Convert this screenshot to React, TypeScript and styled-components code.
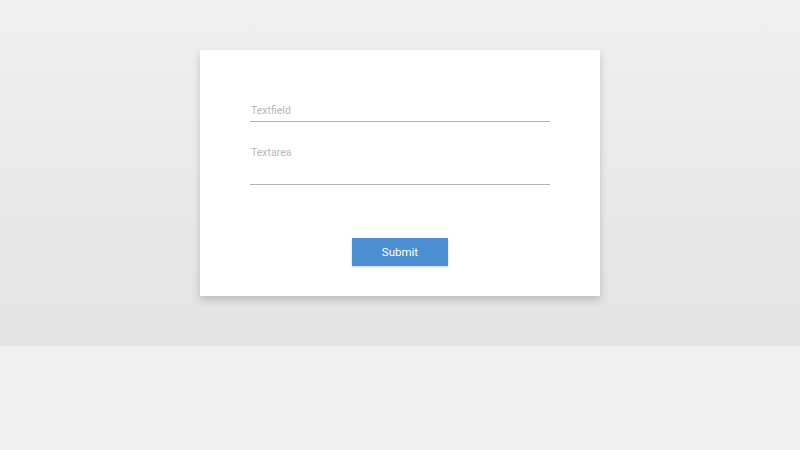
import React from "react";
import styled, { createGlobalStyle } from "styled-components";

const GlobalStyle = createGlobalStyle`
  * {
    box-sizing: border-box;
  }
  body {
    margin: 0;
    background: #f0f0f0;
    font-family: Roboto, "Liberation Sans", sans-serif;
  }
`;

const Stage = styled.div`
  height: 346px;
  padding-top: 50px;
  background: linear-gradient(to bottom, #f0f0f0 0%, #e3e3e3 100%);
  display: flex;
  justify-content: center;
  align-items: flex-start;
`;

const Card = styled.form`
  width: 400px;
  background: #fff;
  padding: 50px 50px 30px;
  box-shadow: 0 4px 8px rgba(0, 0, 0, 0.18);
  display: flex;
  flex-direction: column;
`;

const Field = styled.input`
  display: block;
  width: 100%;
  height: 22px;
  border: none;
  border-bottom: 1px solid #b3b3b3;
  padding: 0 1px;
  outline: none;
  font-family: inherit;
  font-size: 10.5px;
  color: #333;
  background: transparent;

  &::placeholder {
    color: #b5b5b5;
  }
`;

const Area = styled.textarea`
  display: block;
  width: 100%;
  height: 43px;
  margin-top: 20px;
  border: none;
  border-bottom: 1px solid #b3b3b3;
  padding: 5px 1px 0;
  outline: none;
  resize: none;
  font-family: inherit;
  font-size: 10.5px;
  line-height: 12px;
  color: #333;
  background: transparent;

  &::placeholder {
    color: #b5b5b5;
  }
`;

const Actions = styled.div`
  display: flex;
  justify-content: center;
  margin-top: 53px;
`;

const SubmitButton = styled.button`
  width: 96px;
  height: 28px;
  border: none;
  background: #4b8fd3;
  color: #fff;
  font-family: inherit;
  font-size: 11.5px;
  box-shadow: 0 1px 2px rgba(0, 0, 0, 0.2);
  cursor: pointer;
`;

const App = () => {
  return (
    <>
      <GlobalStyle />
      <Stage>
        <Card onSubmit={(e) => e.preventDefault()}>
          <Field placeholder="Textfield" />
          <Area placeholder="Textarea" />
          <Actions>
            <SubmitButton type="submit">Submit</SubmitButton>
          </Actions>
        </Card>
      </Stage>
    </>
  );
};

export default App;
